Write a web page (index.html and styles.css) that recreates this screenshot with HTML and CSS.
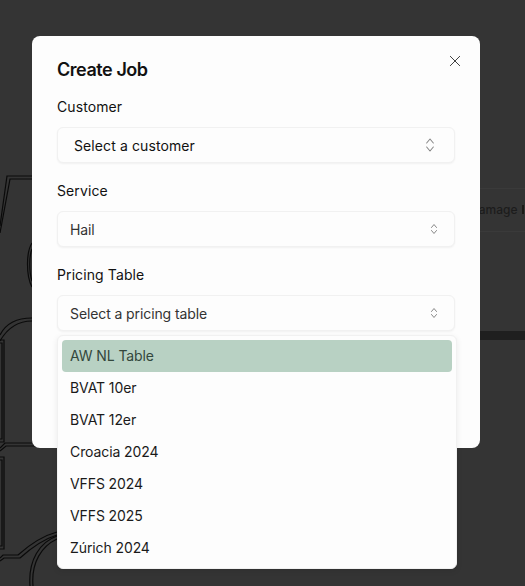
FILE: index.html
```html
<!DOCTYPE html>
<html lang="en">
<head>
    <meta charset="UTF-8">
    <meta name="viewport" content="width=device-width, initial-scale=1.0">
    <title>Create Job</title>
    <link rel="stylesheet" href="styles.css">
</head>
<body>
    <!-- page behind the overlay -->
    <div class="backdrop">
        <svg class="sketch" width="525" height="586" viewBox="0 0 525 586" fill="none">
            <g stroke="#0a0a0a" stroke-width="1.2">
                <path d="M0 226 L7 176 H32"/>
                <path d="M0 233 L10 179 H32"/>
                <path d="M32 243 C26 252 26 276 32 287"/>
                <path d="M32 249 C29 256 29 272 32 281"/>
                <path d="M0 335 C6 323 16 318 32 318"/>
                <path d="M0 341 C8 327 18 321 32 321"/>
                <path d="M0 340 H4 V442 H0"/>
                <path d="M0 343 H2 V439 H0"/>
                <path d="M0 448 L5 443 H32"/>
                <path d="M0 451 L6 446 H36"/>
                <path d="M0 457 H4 V549 H0"/>
                <path d="M0 460 H2 V546 H0"/>
                <path d="M0 558 L3 555 H18 C28 546 42 536 57 532"/>
                <path d="M0 561 L4 558 H20 C30 549 44 539 57 535"/>
                <path d="M30 586 C28 560 40 542 57 536"/>
                <path d="M33 586 C31 562 42 546 57 539"/>
            </g>
            <path d="M480 335.5 H525" stroke="#1f1f1f" stroke-width="9"/>
            <path d="M480 188.5 H525 M480 231.5 H525" stroke="#3a3a3a" stroke-width="1"/>
            <path d="M523 205 V214" stroke="#1c1a16" stroke-width="2"/>
        </svg>
        <span class="behind-text">Damage</span>
    </div>

    <div class="dialog">
        <h2 class="dialog-title">Create Job</h2>
        <svg class="close-icon" width="16" height="16" viewBox="0 0 24 24" fill="none" stroke="#333" stroke-width="1.4" stroke-linecap="round">
            <path d="M19 5 L5 19"/>
            <path d="M5 5 L19 19"/>
        </svg>

        <div class="field">
            <label class="field-label">Customer</label>
            <div class="select select-large">
                <span>Select a customer</span>
                <svg class="chevrons" width="16" height="16" viewBox="0 0 24 24" fill="none" stroke="#888" stroke-width="1.6" stroke-linecap="round" stroke-linejoin="round">
                    <path d="M7 9 L12 3 L17 9"/>
                    <path d="M7 15 L12 21 L17 15"/>
                </svg>
            </div>
        </div>

        <div class="field">
            <label class="field-label">Service</label>
            <div class="select">
                <span>Hail</span>
                <svg class="chevrons" width="12" height="12" viewBox="0 0 24 24" fill="none" stroke="#888" stroke-width="2" stroke-linecap="round" stroke-linejoin="round">
                    <path d="M7 9 L12 3 L17 9"/>
                    <path d="M7 15 L12 21 L17 15"/>
                </svg>
            </div>
        </div>

        <div class="field">
            <label class="field-label">Pricing Table</label>
            <div class="select">
                <span>Select a pricing table</span>
                <svg class="chevrons" width="12" height="12" viewBox="0 0 24 24" fill="none" stroke="#888" stroke-width="2" stroke-linecap="round" stroke-linejoin="round">
                    <path d="M7 9 L12 3 L17 9"/>
                    <path d="M7 15 L12 21 L17 15"/>
                </svg>
            </div>
            <div class="menu">
                <div class="option active">AW NL Table</div>
                <div class="option">BVAT 10er</div>
                <div class="option">BVAT 12er</div>
                <div class="option">Croacia 2024</div>
                <div class="option">VFFS 2024</div>
                <div class="option">VFFS 2025</div>
                <div class="option">Zúrich 2024</div>
            </div>
        </div>
    </div>
</body>
</html>
```

FILE: styles.css
```css
* {
    box-sizing: border-box;
}
body {
    margin: 0;
    height: 586px;
    overflow: hidden;
    position: relative;
    background-color: #343434;
    color: #171717;
    font-family: "Inter", "Liberation Sans", sans-serif;
    font-size: 14px;
}
.backdrop {
    position: absolute;
    inset: 0;
}
.sketch {
    display: block;
}
.behind-text {
    position: absolute;
    left: 470px;
    top: 202px;
    font-size: 12px;
    font-weight: 500;
    white-space: nowrap;
    color: #1c1c1c;
}
.dialog {
    position: relative;
    width: 448px;
    height: 412px;
    margin: 36px 0 0 32px;
    padding: 24px 25px;
    background: #fdfdfd;
    border-radius: 8px;
}
.dialog-title {
    margin: 0 0 18px;
    font-size: 18px;
    font-weight: 600;
    line-height: 20px;
    letter-spacing: -0.45px;
    color: #111;
}
.close-icon {
    position: absolute;
    top: 17px;
    right: 17px;
}
.field {
    position: relative;
    margin-bottom: 19px;
}
.field-label {
    display: block;
    height: 18px;
    margin-bottom: 11px;
    line-height: 18px;
    letter-spacing: 0.1px;
    color: #111;
}
.select {
    display: flex;
    justify-content: space-between;
    align-items: center;
    height: 36px;
    padding: 0 14px 0 12px;
    background: #fdfdfd;
    border: 1px solid #f1f1f1;
    border-radius: 6px;
    box-shadow: 0 1px 2px rgba(0, 0, 0, 0.05);
    letter-spacing: -0.1px;
    color: #333;
}
.select-large {
    padding: 0 16px;
    letter-spacing: 0.1px;
    color: #111;
}
.menu {
    position: absolute;
    top: 69px;
    left: 0;
    width: 400px;
    padding: 4px;
    background: #fdfdfd;
    border: 1px solid #f1f1f1;
    border-radius: 6px;
    box-shadow: 0 2px 6px rgba(0, 0, 0, 0.08);
}
.option {
    height: 32px;
    padding: 0 8px;
    border-radius: 4px;
    line-height: 32px;
    letter-spacing: -0.1px;
    color: #1a1a1a;
}
.option.active {
    background: #b8d1c3;
    color: #33473c;
}
```
